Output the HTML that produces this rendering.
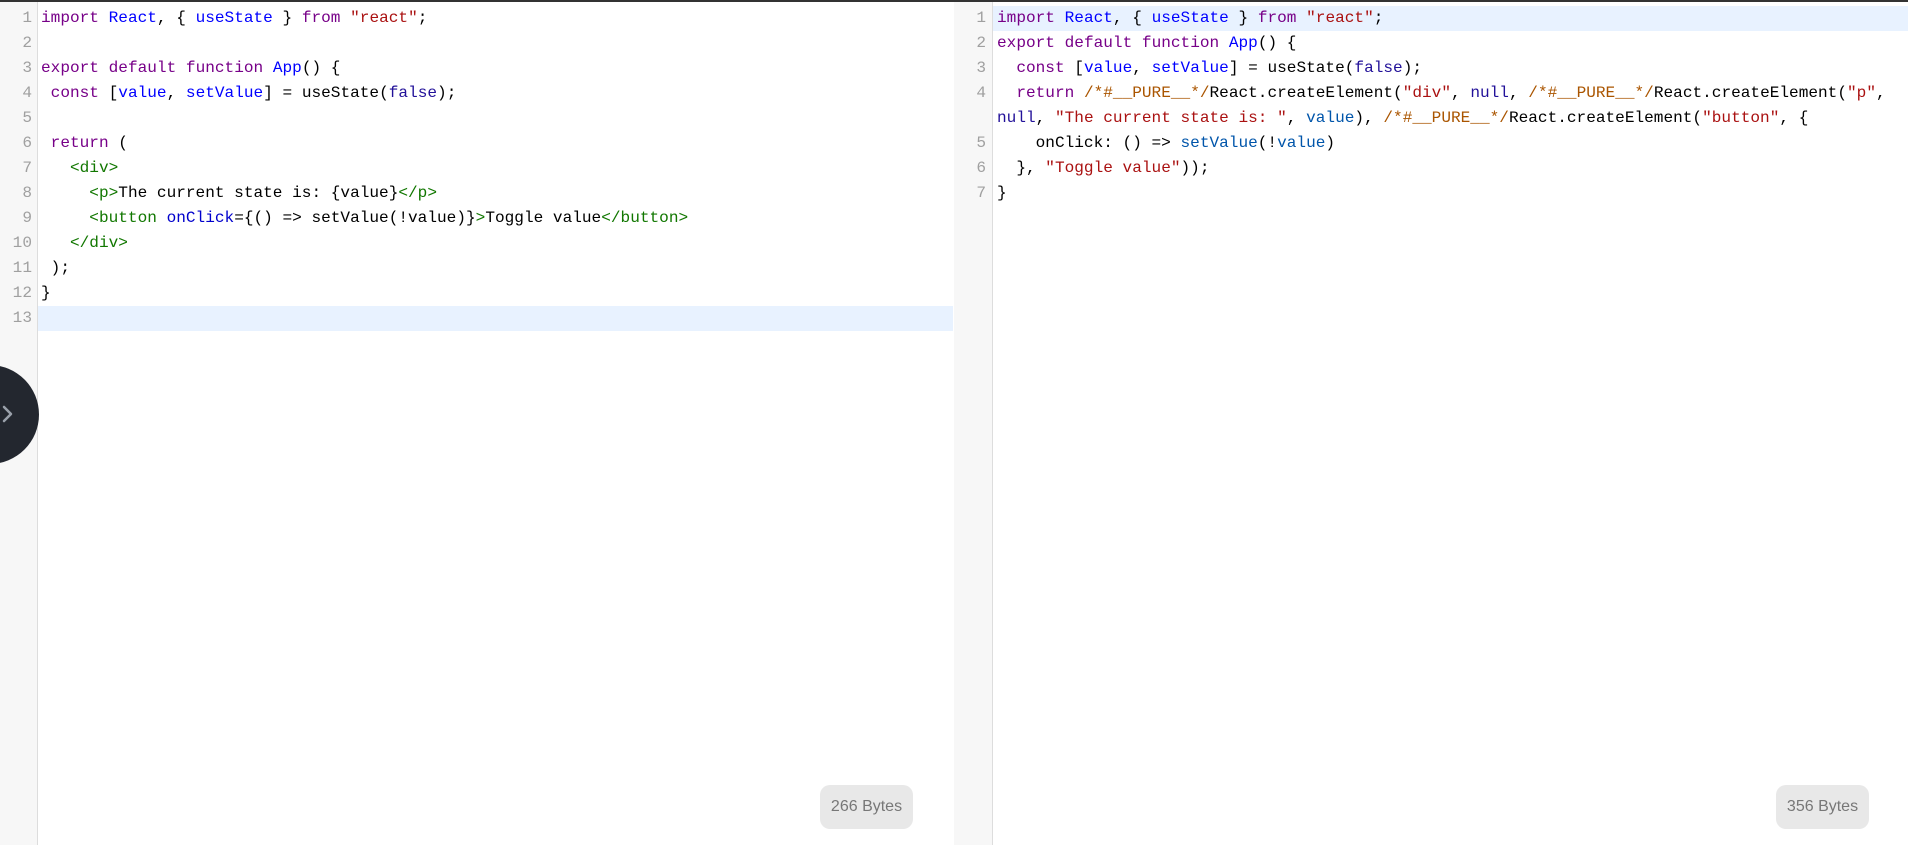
<!DOCTYPE html>
<html><head><meta charset="utf-8"><style>
*{margin:0;padding:0;box-sizing:border-box}
body{width:1908px;height:845px;overflow:hidden;background:#fff;position:relative;font-family:"Liberation Mono",monospace;font-size:16.1px}
.topbar{position:absolute;left:0;top:0;width:1908px;height:2px;background:#333}
.g{position:absolute;top:2px;bottom:0;background:#f7f7f7;border-right:1px solid #ddd}
.ln{position:absolute;height:25px;line-height:25px;color:#a0a0a0;text-align:right;white-space:pre}
.cl{position:absolute;height:25px;line-height:25px;white-space:pre;color:#000}
.hl{position:absolute;height:25px;background:#e8f2ff}
.k{color:#708}.d{color:#00f}.v{color:#05a}.s{color:#a11}.t{color:#170}.a{color:#00c}.c{color:#a50}.at{color:#219}
.badge{position:absolute;top:785px;width:93px;height:44px;border-radius:10px;background:#e8e8e8;color:#777;font-family:"Liberation Sans",sans-serif;font-size:16px;line-height:44px;text-align:center}
</style></head><body>
<div class="topbar"></div>
<div class="g" style="left:0;width:38px"></div>
<div class="g" style="left:954px;width:39px;border-left:0"></div>
<div class="hl" style="left:38px;width:915px;top:306px"></div>
<div class="hl" style="left:993px;width:915px;top:6px"></div>

<div class="ln" style="left:0;width:32px;top:6px">1
2
3
4
5
6
7
8
9
10
11
12
13</div>
<div class="cl" style="left:41px;top:6px"><span class="k">import</span> <span class="d">React</span>, { <span class="d">useState</span> } <span class="k">from</span> <span class="s">"react"</span>;

<span class="k">export</span> <span class="k">default</span> <span class="k">function</span> <span class="d">App</span>() {
 <span class="k">const</span> [<span class="d">value</span>, <span class="d">setValue</span>] = useState(<span class="at">false</span>);

 <span class="k">return</span> (
   <span class="t">&lt;div&gt;</span>
     <span class="t">&lt;p&gt;</span>The current state is: {value}<span class="t">&lt;/p&gt;</span>
     <span class="t">&lt;button</span> <span class="a">onClick</span>={() =&gt; setValue(!value)}<span class="t">&gt;</span>Toggle value<span class="t">&lt;/button&gt;</span>
   <span class="t">&lt;/div&gt;</span>
 );
}
</div>

<div class="ln" style="left:954px;width:32px;top:6px">1
2
3
4

5
6
7</div>
<div class="cl" style="left:997px;top:6px"><span class="k">import</span> <span class="d">React</span>, { <span class="d">useState</span> } <span class="k">from</span> <span class="s">"react"</span>;
<span class="k">export</span> <span class="k">default</span> <span class="k">function</span> <span class="d">App</span>() {
  <span class="k">const</span> [<span class="d">value</span>, <span class="d">setValue</span>] = useState(<span class="at">false</span>);
  <span class="k">return</span> <span class="c">/*#__PURE__*/</span>React.createElement(<span class="s">"div"</span>, <span class="at">null</span>, <span class="c">/*#__PURE__*/</span>React.createElement(<span class="s">"p"</span>,
<span class="at">null</span>, <span class="s">"The current state is: "</span>, <span class="v">value</span>), <span class="c">/*#__PURE__*/</span>React.createElement(<span class="s">"button"</span>, {
    onClick: () =&gt; <span class="v">setValue</span>(!<span class="v">value</span>)
  }, <span class="s">"Toggle value"</span>));
}</div>

<div class="badge" style="left:820px">266 Bytes</div>
<div class="badge" style="left:1776px">356 Bytes</div>

<div style="position:absolute;left:-60px;top:365px;width:99px;height:99px;border-radius:50%;background:#23272f"></div>
<svg style="position:absolute;left:0;top:402px" width="20" height="24" viewBox="0 0 20 24"><path d="M4 5 L11 12 L4 19" fill="none" stroke="#9aa0aa" stroke-width="2.5" stroke-linecap="round" stroke-linejoin="round"/></svg>
</body></html>
